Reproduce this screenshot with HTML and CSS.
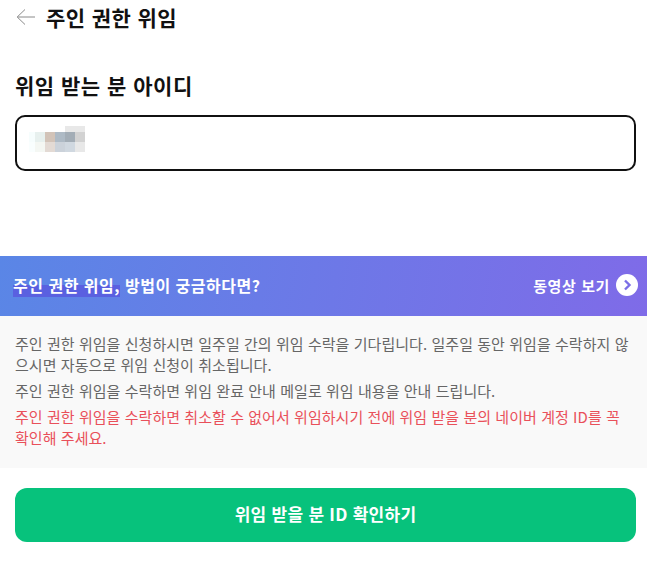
FILE: index.html
```html
<!DOCTYPE html>
<html lang="ko">
<head>
    <meta charset="UTF-8">
    <meta name="viewport" content="width=device-width, initial-scale=1.0">
    <title>주인 권한 위임</title>
    <link rel="stylesheet" href="styles.css">
</head>
<body>
    <!-- Header -->
    <header class="top-bar">
        <svg class="back-icon" width="19" height="16" viewBox="0 0 19 16" fill="none" stroke="#8a8a8a" stroke-width="1">
            <path d="M9 .5 1.2 8 9 15.500M1.500 8H19"/>
        </svg>
        <h1 class="page-title">주인 권한 위임</h1>
    </header>

    <!-- Delegate ID -->
    <section class="id-section">
        <h2 class="id-label">위임 받는 분 아이디</h2>
        <div class="id-input">
            <svg class="id-blur" width="56" height="26" viewBox="0 0 56 26">
                <rect x="36" y="0" width="20" height="6" fill="#e8e8e8"/>
                <rect x="0" y="6" width="6" height="10" fill="#f6fdfd"/>
                <rect x="6" y="6" width="10" height="10" fill="#e7f0ee"/>
                <rect x="16" y="6" width="10" height="10" fill="#d2c3b8"/>
                <rect x="26" y="6" width="10" height="10" fill="#aebac5"/>
                <rect x="36" y="6" width="10" height="10" fill="#a3adb6"/>
                <rect x="46" y="6" width="10" height="10" fill="#d2d2d2"/>
                <rect x="0" y="16" width="6" height="10" fill="#f9fefe"/>
                <rect x="6" y="16" width="10" height="10" fill="#f4f7f3"/>
                <rect x="16" y="16" width="10" height="10" fill="#e3dad4"/>
                <rect x="26" y="16" width="10" height="10" fill="#cbd2da"/>
                <rect x="36" y="16" width="10" height="10" fill="#d0d8e0"/>
                <rect x="46" y="16" width="10" height="10" fill="#e8e8e8"/>
            </svg>
        </div>
    </section>

    <!-- Video banner -->
    <a class="guide-banner" href="#">
        <span class="guide-text"><span class="guide-selected">주인 권한 위임,</span> 방법이 궁금하다면?</span>
        <span class="guide-link">
            동영상 보기
            <svg class="guide-arrow" width="22" height="22" viewBox="0 0 22 22">
                <circle cx="11" cy="11" r="11" fill="#fff"/>
                <path d="M9 6.500 13.500 11 9 15.500" fill="none" stroke="#7b6fe6" stroke-width="2.400"/>
            </svg>
        </span>
    </a>

    <!-- Notice -->
    <div class="notice">
        <p>주인 권한 위임을 신청하시면 일주일 간의 위임 수락을 기다립니다. 일주일 동안 위임을 수락하지 않으시면 자동으로 위임 신청이 취소됩니다.</p>
        <p>주인 권한 위임을 수락하면 위임 완료 안내 메일로 위임 내용을 안내 드립니다.</p>
        <p class="notice-warn">주인 권한 위임을 수락하면 취소할 수 없어서 위임하시기 전에 위임 받을 분의 네이버 계정 ID를 꼭 확인해 주세요.</p>
    </div>

    <div class="action">
        <button class="confirm-btn" type="button">위임 받을 분 ID 확인하기</button>
    </div>
</body>
</html>
```

FILE: styles.css
```css
/* Global styles */
body {
    font-family: "Noto Sans CJK KR", "Liberation Sans", sans-serif;
    background-color: #fff;
    margin: 0;
    padding: 0;
    color: #111;
}

/* Header */
.top-bar {
    display: flex;
    align-items: center;
    gap: 11px;
    height: 34px;
    padding-left: 16px;
}

.page-title {
    margin: 0;
    font-size: 21px;
    font-weight: 700;
    line-height: 34px;
    letter-spacing: 0.400px;
}

/* Delegate ID */
.id-section {
    padding: 37px 11px 0 15px;
}

.id-label {
    margin: 0 0 16px;
    font-size: 21px;
    font-weight: 700;
    line-height: 28px;
    letter-spacing: 0.500px;
}

.id-input {
    box-sizing: border-box;
    height: 56px;
    padding: 9px 12px;
    border: 2px solid #111;
    border-radius: 10px;
}

.id-blur {
    display: block;
}

/* Video banner */
.guide-banner {
    display: flex;
    justify-content: space-between;
    align-items: center;
    height: 60px;
    margin-top: 85px;
    padding: 0 9px 2px 13px;
    box-sizing: border-box;
    background: linear-gradient(100deg, #5a86e6, #7f6be8);
    color: #fff;
    text-decoration: none;
    font-weight: 700;
}

.guide-text {
    font-size: 16px;
    letter-spacing: 0.500px;
}

.guide-selected {
    background: linear-gradient(to bottom, transparent 50%, #5a60e0 50%);
}

.guide-link {
    display: flex;
    align-items: center;
    gap: 6px;
    font-size: 15px;
    letter-spacing: 0.600px;
}

.guide-arrow {
    display: block;
}

/* Notice */
.notice {
    padding: 17px 15px 20px;
    background-color: #f9f9f9;
    color: #666;
    font-size: 15px;
    line-height: 21px;
    letter-spacing: 0.050px;
    word-break: break-all;
}

.notice p {
    margin: 0 0 5px;
}

.notice p:last-child {
    margin-bottom: 0;
}

.notice .notice-warn {
    color: #e9505a;
}

/* Confirm button */
.action {
    padding: 20px 11px 0 15px;
}

.confirm-btn {
    display: block;
    width: 100%;
    height: 54px;
    padding-bottom: 4px;
    border: none;
    border-radius: 12px;
    background-color: #07c27c;
    color: #fff;
    font-family: inherit;
    font-size: 17px;
    font-weight: 700;
    letter-spacing: 0.270px;
}
```
